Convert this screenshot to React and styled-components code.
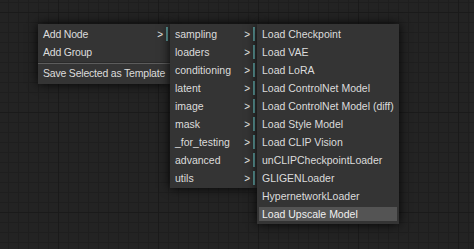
import React from 'react';
import styled, { createGlobalStyle } from 'styled-components';

const GlobalStyle = createGlobalStyle`
	html, body {
		margin: 0;
		padding: 0;
		background: #222;
	}
	body {
		font-family: "Liberation Sans", Arial, sans-serif;
	}
`;

const rootMenu = [
	{ label: 'Add Node', submenu: true },
	{ label: 'Add Group' },
	{ separator: true },
	{ label: 'Save Selected as Template' },
];

const categories = [
	'sampling',
	'loaders',
	'conditioning',
	'latent',
	'image',
	'mask',
	'_for_testing',
	'advanced',
	'utils',
];

const loaders = [
	'Load Checkpoint',
	'Load VAE',
	'Load LoRA',
	'Load ControlNet Model',
	'Load ControlNet Model (diff)',
	'Load Style Model',
	'Load CLIP Vision',
	'unCLIPCheckpointLoader',
	'GLIGENLoader',
	'HypernetworkLoader',
	'Load Upscale Model',
];

// Canvas with the litegraph style grid
const Canvas = styled.div`
	position: relative;
	width: 474px;
	height: 249px;
	overflow: hidden;
	background-color: #232323;
	background-image:
		linear-gradient(to right, #1a1a1a 1px, transparent 1px),
		linear-gradient(to bottom, #1a1a1a 1px, transparent 1px),
		linear-gradient(to right, #1e1e1e 1px, transparent 1px),
		linear-gradient(to bottom, #1e1e1e 1px, transparent 1px);
	background-size: 100px 100px, 100px 100px, 10px 10px, 10px 10px;
	background-position: 58px 0, 0 12px, 8px 0, 0 2px;
`;

// Context menus sit over the canvas
const MenuLayer = styled.div`
	position: absolute;
	left: 38px;
	top: 24px;
	display: flex;
	align-items: flex-start;
`;

const Menu = styled.div`
	display: flex;
	flex-direction: column;
	width: ${p => p.width}px;
	padding: 1px 0 ${p => p.padBottom || 1}px;
	background: #343434;
	box-shadow: 0 0 10px rgba(0, 0, 0, 0.9);
	color: #dcdcdc;
	font-size: 10.5px;
	letter-spacing: ${p => (p.tight ? -0.2 : 0)}px;
	box-sizing: border-box;
`;

const Entry = styled.div`
	display: flex;
	align-items: center;
	justify-content: space-between;
	height: 14px;
	margin: 2px;
	padding: 0 3px 0 3px;
	white-space: nowrap;
	background: ${p => (p.active ? '#545454' : 'transparent')};
	color: ${p => (p.active ? '#f0f0f0' : '#dcdcdc')};
	border-right: 2px solid ${p => (p.submenu ? '#5f9e9e' : 'transparent')};
`;

const Arrow = styled.span`
	font-size: 10px;
	color: #e8e8e8;
	margin-left: 6px;
`;

const Separator = styled.div`
	height: 0;
	margin: 1px 0 0;
	border-top: 1px solid #2a2a2a;
	border-bottom: 1px solid #5c5c5c;
`;

export default function App() {
	return (
		<>
			<GlobalStyle />
			<Canvas>
				<MenuLayer>
					<Menu width={132} padBottom={2} tight>
						{rootMenu.map((item, i) =>
							item.separator ? (
								<Separator key={i} />
							) : (
								<Entry key={i} submenu={item.submenu}>
									<span>{item.label}</span>
									{item.submenu && <Arrow>&gt;</Arrow>}
								</Entry>
							)
						)}
					</Menu>
					<Menu width={87}>
						{categories.map(name => (
							<Entry key={name} submenu>
								<span>{name}</span>
								<Arrow>&gt;</Arrow>
							</Entry>
						))}
					</Menu>
					<Menu width={142}>
						{loaders.map((name, i) => (
							<Entry key={name} active={i === loaders.length - 1}>
								<span>{name}</span>
							</Entry>
						))}
					</Menu>
				</MenuLayer>
			</Canvas>
		</>
	);
}
